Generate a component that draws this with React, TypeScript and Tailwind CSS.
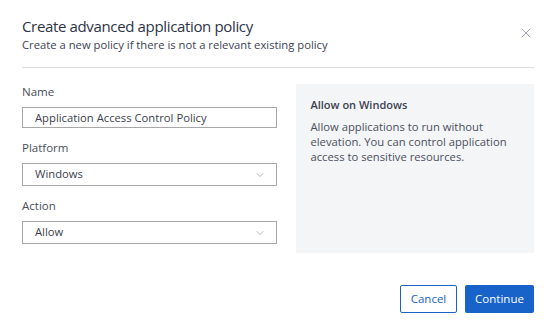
import { ChevronDown, X } from "lucide-react";

function Field({ label, children }: { label: string; children: React.ReactNode }) {
  return (
    <div className="flex flex-col">
      <label className="text-[11.5px] leading-[16px] text-[#4a4f5c] mb-[7px]">{label}</label>
      {children}
    </div>
  );
}

function Select({ value }: { value: string }) {
  return (
    <div className="flex h-[23px] items-center justify-between border border-[#a8a8a8] pl-[12px] pr-[10px] text-[11.25px] text-[#3b3f4c]">
      <span>{value}</span>
      <ChevronDown className="h-[12px] w-[12px] text-[#9a9a9a]" strokeWidth={1.5} />
    </div>
  );
}

export default function App() {
  return (
    <div
      className="w-[554px] h-[326px] bg-white pl-[22px] pr-[20px] pt-[16px]"
      style={{ fontFamily: '"Open Sans", sans-serif' }}
    >
      <div className="flex justify-between">
        <div>
          <h1 className="text-[15px] leading-[20px] tracking-[-0.35px] text-[#2e3348]">
            Create advanced application policy
          </h1>
          <p className="text-[11.25px] leading-[16px] text-[#3c4254] mt-[1px]">
            Create a new policy if there is not a relevant existing policy
          </p>
        </div>
        <button className="mt-[9px] h-[16px] text-[#7f889b]">
          <X className="h-[16px] w-[16px]" strokeWidth={1.1} />
        </button>
      </div>
      <div className="mt-[14px] border-t border-[#dcdcdc]" />
      <div className="mt-[16px] flex gap-[19px]">
        <div className="w-[256px] flex flex-col gap-[12px]">
          <Field label="Name">
            <input
              className="h-[21px] border border-[#a8a8a8] px-[12px] text-[11.25px] text-[#3b3f4c] outline-none"
              defaultValue="Application Access Control Policy"
            />
          </Field>
          <Field label="Platform">
            <Select value="Windows" />
          </Field>
          <Field label="Action">
            <Select value="Allow" />
          </Field>
        </div>
        <div className="w-[238px] h-[169px] bg-[#f4f5f7] px-[14px] pt-[13px]">
          <h2 className="text-[11px] leading-[16px] font-semibold text-[#3c4050]">Allow on Windows</h2>
          <p className="mt-[6px] text-[11.25px] leading-[15px] text-[#4a4f5c]">
            Allow applications to run without elevation. You can control application access to sensitive resources.
          </p>
        </div>
      </div>
      <div className="mt-[32px] flex justify-end gap-[8px]">
        <button className="h-[28px] w-[57px] rounded-[2px] border border-[#1a62c8] text-[11.5px] text-[#1a62c8]">
          Cancel
        </button>
        <button className="h-[28px] w-[69px] rounded-[2px] bg-[#1763c9] text-[11.5px] text-white">Continue</button>
      </div>
    </div>
  );
}
